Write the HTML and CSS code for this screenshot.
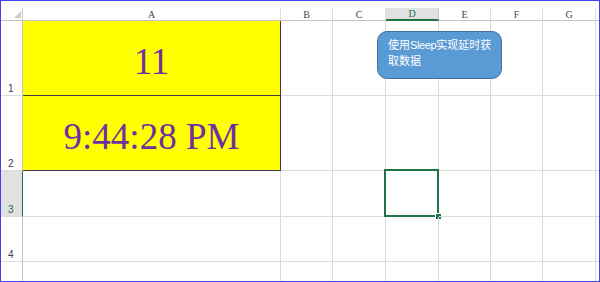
FILE: index.html
```html
<!DOCTYPE html>
<html lang="zh">
<head>
<meta charset="utf-8">
<title>Sheet</title>
<link rel="stylesheet" href="styles.css">
</head>
<body>
<div class="frame">
  <div class="sheet">
    <div class="corner"><span class="tri"></span></div>
    <div class="ch">A</div>
    <div class="ch">B</div>
    <div class="ch">C</div>
    <div class="ch sel">D</div>
    <div class="ch">E</div>
    <div class="ch">F</div>
    <div class="ch">G</div>
    <div class="ch end"></div>

    <div class="rh">1</div>
    <div class="c big yellow first">11</div>
    <div class="c"></div><div class="c"></div><div class="c"></div><div class="c"></div><div class="c"></div><div class="c"></div><div class="c end"></div>

    <div class="rh">2</div>
    <div class="c big yellow">9:44:28 PM</div>
    <div class="c"></div><div class="c"></div><div class="c"></div><div class="c"></div><div class="c"></div><div class="c"></div><div class="c end"></div>

    <div class="rh sel">3</div>
    <div class="c"></div><div class="c"></div><div class="c"></div>
    <div class="c active"><span class="selbox"></span><span class="handle"></span></div>
    <div class="c"></div><div class="c"></div><div class="c"></div><div class="c end"></div>

    <div class="rh">4</div>
    <div class="c"></div><div class="c"></div><div class="c"></div><div class="c"></div><div class="c"></div><div class="c"></div><div class="c"></div><div class="c end"></div>

    <div class="rh last"></div>
    <div class="c last"></div><div class="c last"></div><div class="c last"></div><div class="c last"></div><div class="c last"></div><div class="c last"></div><div class="c last"></div><div class="c end last"></div>
  </div>
  <div class="callout">使用<span class="latin">Sleep</span>实现延时获<br>取数据</div>
</div>
</body>
</html>
```

FILE: styles.css
```css
* { box-sizing: border-box; }
html, body { margin: 0; padding: 0; background: #fff; }
body { width: 600px; height: 282px; overflow: hidden; }

.frame {
  position: relative;
  width: 600px;
  height: 282px;
  border: 1px solid #4343ee;
  padding-top: 7px;
  background: #fff;
}

.sheet {
  display: grid;
  grid-template-columns: 22px 258px 52px 53px 53px 52px 52px 53px 3px;
  grid-template-rows: 13px 75px 75px 46px 45px 19px;
}

.corner, .ch, .rh {
  font-family: "Liberation Serif", "DejaVu Serif", serif;
  font-size: 10px;
  color: #444;
  background: #fff;
}

.corner {
  position: relative;
  border-right: 1px solid #c4c4c4;
  border-bottom: 1px solid #c4c4c4;
}
.tri {
  position: absolute;
  left: 13px;
  top: 3px;
  width: 7px;
  height: 7px;
  background: #cbcbcb;
  clip-path: polygon(100% 0, 100% 100%, 0 100%);
}

.ch {
  display: flex;
  align-items: center;
  justify-content: center;
  border-right: 1px solid #dedede;
  border-bottom: 1px solid #c4c4c4;
  line-height: 10px;
  padding-top: 1px;
}
.ch.sel {
  background: #e1e1e1;
  color: #217346;
  border-bottom: 2px solid #217346;
  border-right-color: #c8c8c8;
}
.ch.end { border-right: 0; }

.rh {
  display: flex;
  align-items: flex-end;
  padding: 0 0 1px 7px;
  border-right: 1px solid #c4c4c4;
  border-bottom: 1px solid #dcdcdc;
  line-height: 10px;
  font-family: "Liberation Sans", "DejaVu Sans", sans-serif;
  font-size: 10px;
}
.rh.sel {
  background: #e1e1e1;
  color: #217346;
  border-right-color: #217346;
}
.rh.last { border-bottom: 0; }

.c {
  position: relative;
  border-right: 1px solid #dadada;
  border-bottom: 1px solid #dadada;
}
.c.end { border-right: 0; }
.c.last { border-bottom: 0; }

.yellow {
  background: #ffff00;
  border-right: 1px solid #3c3c3c;
  border-bottom: 1px solid #3c3c3c;
}

.big {
  display: flex;
  align-items: center;
  justify-content: center;
  padding-top: 6px;
  font-family: "Liberation Serif", "DejaVu Serif", serif;
  font-size: 37px;
  line-height: 37px;
  color: #7030a0;
  white-space: nowrap;
}

.selbox {
  position: absolute;
  left: -2px;
  top: -2px;
  right: -1px;
  bottom: -1px;
  border: 2px solid #217346;
}
.handle {
  position: absolute;
  right: -3px;
  bottom: -3px;
  width: 6px;
  height: 6px;
  background: #217346;
  border-left: 1px solid #fff;
  border-top: 1px solid #fff;
}

.callout {
  position: absolute;
  left: 376px;
  top: 30px;
  width: 125px;
  height: 48px;
  padding: 5px 0 0 10px;
  background: #5b9bd5;
  border: 1px solid #41719c;
  border-radius: 10px;
  color: #fff;
  font-family: "Noto Sans CJK SC", "Noto Sans", sans-serif;
  font-size: 11px;
  line-height: 15px;
}
.latin {
  font-family: "Liberation Sans", "Noto Sans CJK SC", sans-serif;
  letter-spacing: -0.4px;
}
```
